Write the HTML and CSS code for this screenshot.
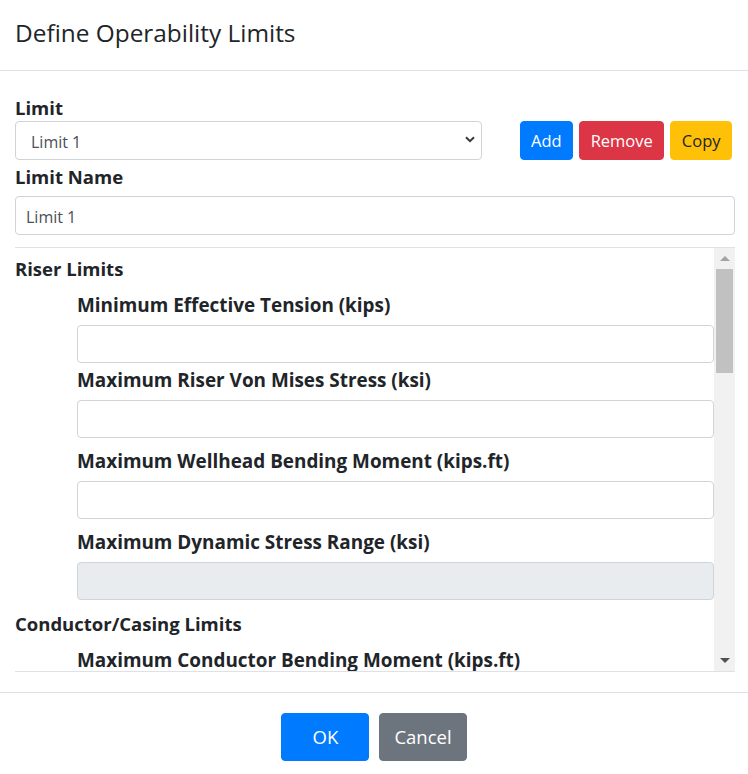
FILE: index.html
```html
<!DOCTYPE html>
<html lang="en">
<head>
<meta charset="utf-8">
<title>Define Operability Limits</title>
<link rel="stylesheet" href="styles.css">
</head>
<body>
<div class="modal">
  <div class="modal-header">
    <h5 class="modal-title">Define Operability Limits</h5>
  </div>
  <div class="modal-body">
    <div class="top-row">
      <div class="limit-col">
        <label class="label" for="limitSel">Limit</label>
        <div class="select-wrap">
          <select id="limitSel" class="select">
            <option>Limit 1</option>
          </select>
          <svg class="chevron" width="10" height="7" viewBox="0 0 10 7"><path d="M1 1.2 L5 5.2 L9 1.2" fill="none" stroke="#343a40" stroke-width="2"/></svg>
        </div>
      </div>
      <div class="btn-group">
        <button class="btn btn-primary">Add</button>
        <button class="btn btn-danger">Remove</button>
        <button class="btn btn-warning">Copy</button>
      </div>
    </div>
    <div class="name-group">
      <label class="label" for="limitName">Limit Name</label>
      <input id="limitName" class="text-input" type="text" value="Limit 1">
    </div>
    <div class="scroll-box">
      <div class="scroll-content">
        <div class="section-label">Riser Limits</div>
        <div class="field field-first">
          <h5 class="field-label">Minimum Effective Tension (kips)</h5>
          <input class="field-input" type="text">
        </div>
        <div class="field field-tight">
          <h5 class="field-label">Maximum Riser Von Mises Stress (ksi)</h5>
          <input class="field-input" type="text">
        </div>
        <div class="field">
          <h5 class="field-label">Maximum Wellhead Bending Moment (kips.ft)</h5>
          <input class="field-input" type="text">
        </div>
        <div class="field">
          <h5 class="field-label">Maximum Dynamic Stress Range (ksi)</h5>
          <input class="field-input" type="text" disabled>
        </div>
        <div class="section-label next-section">Conductor/Casing Limits</div>
        <div class="field field-after-section">
          <h5 class="field-label">Maximum Conductor Bending Moment (kips.ft)</h5>
          <input class="field-input" type="text">
        </div>
      </div>
      <div class="scrollbar">
        <div class="sb-btn"><svg width="10" height="5" viewBox="0 0 10 5"><path d="M0 5 L5 0 L10 5Z" fill="#a3a3a3"/></svg></div>
        <div class="sb-thumb"></div>
        <div class="sb-space"></div>
        <div class="sb-btn"><svg width="10" height="5" viewBox="0 0 10 5"><path d="M0 0 L10 0 L5 5Z" fill="#505050"/></svg></div>
      </div>
    </div>
  </div>
  <div class="modal-footer">
    <button class="btn btn-lg btn-primary btn-ok">OK</button>
    <button class="btn btn-lg btn-secondary">Cancel</button>
  </div>
</div>
</body>
</html>
```
FILE: styles.css
```css
* {
  box-sizing: border-box;
}

html,
body {
  margin: 0;
  background: #fff;
}

body {
  font-family: "Open Sans", "Noto Sans", sans-serif;
  color: #212529;
}

.modal {
  width: 748px;
}

.modal-header {
  padding: 15px 15px 19px;
  border-bottom: 1px solid #dee2e6;
}

.modal-title {
  margin: 0;
  font-size: 24.4px;
  line-height: 36px;
  font-weight: 400;
}

.modal-body {
  padding: 23px 13px 20px 15px;
}

.top-row {
  display: flex;
  align-items: flex-end;
}

.limit-col {
  width: 467px;
}

.label {
  display: block;
  font-weight: 700;
  font-size: 18.5px;
  line-height: 27px;
}

.select-wrap {
  position: relative;
}

.select {
  -webkit-appearance: none;
  appearance: none;
  display: block;
  width: 100%;
  height: 39px;
  margin: 0;
  padding: 7px 30px 4px 15px;
  border: 1px solid #ced4da;
  border-radius: 4px;
  background: #fff;
  font-family: inherit;
  font-size: 16px;
  line-height: 25px;
  color: #495057;
}

.chevron {
  position: absolute;
  right: 7px;
  top: 15px;
  pointer-events: none;
}

.btn-group {
  display: flex;
  gap: 6px;
  margin-left: auto;
  margin-right: 3px;
}

.btn {
  font-family: inherit;
  border: 1px solid transparent;
  border-radius: 4px;
  color: #fff;
  font-size: 16.5px;
  line-height: 25px;
  padding: 6px 10.5px;
  cursor: pointer;
  white-space: nowrap;
}

.btn-primary {
  background: #007bff;
  border-color: #007bff;
}

.btn-danger {
  background: #dc3545;
  border-color: #dc3545;
}

.btn-warning {
  background: #ffc107;
  border-color: #ffc107;
  color: #212529;
}

.btn-secondary {
  background: #6c757d;
  border-color: #6c757d;
}

.name-group {
  margin-top: 3px;
}

.text-input {
  display: block;
  width: 100%;
  height: 39px;
  margin: 6px 0 0;
  padding: 7px 10px 4px;
  border: 1px solid #ced4da;
  border-radius: 4px;
  background: #fff;
  font-family: inherit;
  font-size: 16px;
  line-height: 25px;
  color: #495057;
}

.scroll-box {
  display: flex;
  height: 425px;
  margin-top: 12px;
  border-top: 1px solid #dee2e6;
  border-bottom: 1px solid #dee2e6;
}

.scroll-content {
  flex: 1;
  min-width: 0;
  overflow: hidden;
  padding-top: 7px;
}

.section-label {
  font-weight: 700;
  font-size: 18.5px;
  line-height: 27px;
}

.next-section {
  margin-top: 10px;
}

.field {
  margin-left: 62px;
  margin-top: 11px;
}

.field-first {
  margin-top: 11px;
}

.field-tight {
  margin-top: 5px;
}

.field-after-section {
  margin-top: 11px;
}

.field-label {
  margin: 0 0 8px;
  font-size: 18.9px;
  font-weight: 700;
  line-height: 24px;
  white-space: nowrap;
}

.field-input {
  display: block;
  width: 100%;
  height: 38px;
  margin: 0;
  padding: 6px 12px;
  border: 1px solid #ced4da;
  border-radius: 4px;
  background: #fff;
  font-family: inherit;
  font-size: 16px;
  color: #495057;
}

.field-input:disabled {
  background: #e9ecef;
}

.scrollbar {
  width: 21px;
  flex: none;
  display: flex;
  flex-direction: column;
  background: #f1f1f1;
}

.sb-btn {
  height: 21px;
  display: flex;
  align-items: center;
  justify-content: center;
}

.sb-thumb {
  height: 104px;
  margin: 0 2px;
  background: #c1c1c1;
}

.sb-space {
  flex: 1;
}

.modal-footer {
  border-top: 1px solid #dee2e6;
  padding: 20px 15px;
  display: flex;
  justify-content: center;
  gap: 10px;
}

.btn-lg {
  font-size: 18.5px;
  line-height: 28px;
  padding: 9px 14px;
}

.btn-ok {
  min-width: 88px;
}
```
